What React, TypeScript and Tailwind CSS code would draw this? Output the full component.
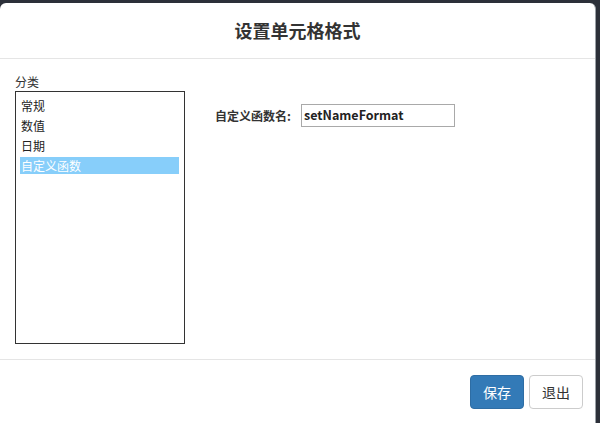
export default function App() {
  const items = ["常规", "数值", "日期", "自定义函数"];
  const font = { fontFamily: '"Microsoft YaHei", "Noto Sans CJK SC", "Noto Sans", sans-serif' };
  return (
    <div className="w-[600px] h-[423px] bg-[#2c3039] overflow-hidden pt-[3px]" style={font}>
      <div className="w-[596px] h-[440px] bg-white rounded-[6px] border-r border-[#9aa0a6] flex flex-col">
        <div className="h-[56px] border-b border-[#e5e5e5] flex items-center justify-center pb-[2px]">
          <h1 className="text-[18px] font-bold text-[#333] leading-none">设置单元格格式</h1>
        </div>
        <div className="h-[300px] px-[15px] pt-[15px] flex">
          <div className="w-[170px] flex flex-col">
            <div className="text-[12px] leading-[16px] text-[#333] h-[16px]">分类</div>
            <div className="mt-[1px] h-[253px] border border-[#333] pl-[4px] pr-[5px] pt-[5px] flex flex-col gap-[3px]">
              {items.map((it, i) => (
                <div
                  key={it}
                  className={
                    "h-[17px] leading-[17px] text-[12px] pl-[1px] " +
                    (i === 3 ? "bg-[#87cefa] text-white" : "text-[#222]")
                  }
                >
                  {it}
                </div>
              ))}
            </div>
          </div>
          <div className="ml-[30px] pt-[30px]">
            <div className="flex items-center h-[23px]">
              <span className="text-[12px] font-bold text-[#333] w-[86px]">自定义函数名:</span>
              <div className="w-[154px] h-[23px] border border-[#a9a9a9] flex items-center px-[2px] text-[12.5px] font-bold text-[#222]">
                setNameFormat
              </div>
            </div>
          </div>
        </div>
        <div className="border-t border-[#e5e5e5] pt-[15px] pr-[12px] flex justify-end gap-[5px]">
          <button className="w-[54px] h-[34px] rounded-[4px] bg-[#337ab7] border border-[#2e6da4] text-white text-[14px]">
            保存
          </button>
          <button className="w-[54px] h-[34px] rounded-[4px] bg-white border border-[#ccc] text-[#333] text-[14px]">
            退出
          </button>
        </div>
      </div>
    </div>
  );
}
